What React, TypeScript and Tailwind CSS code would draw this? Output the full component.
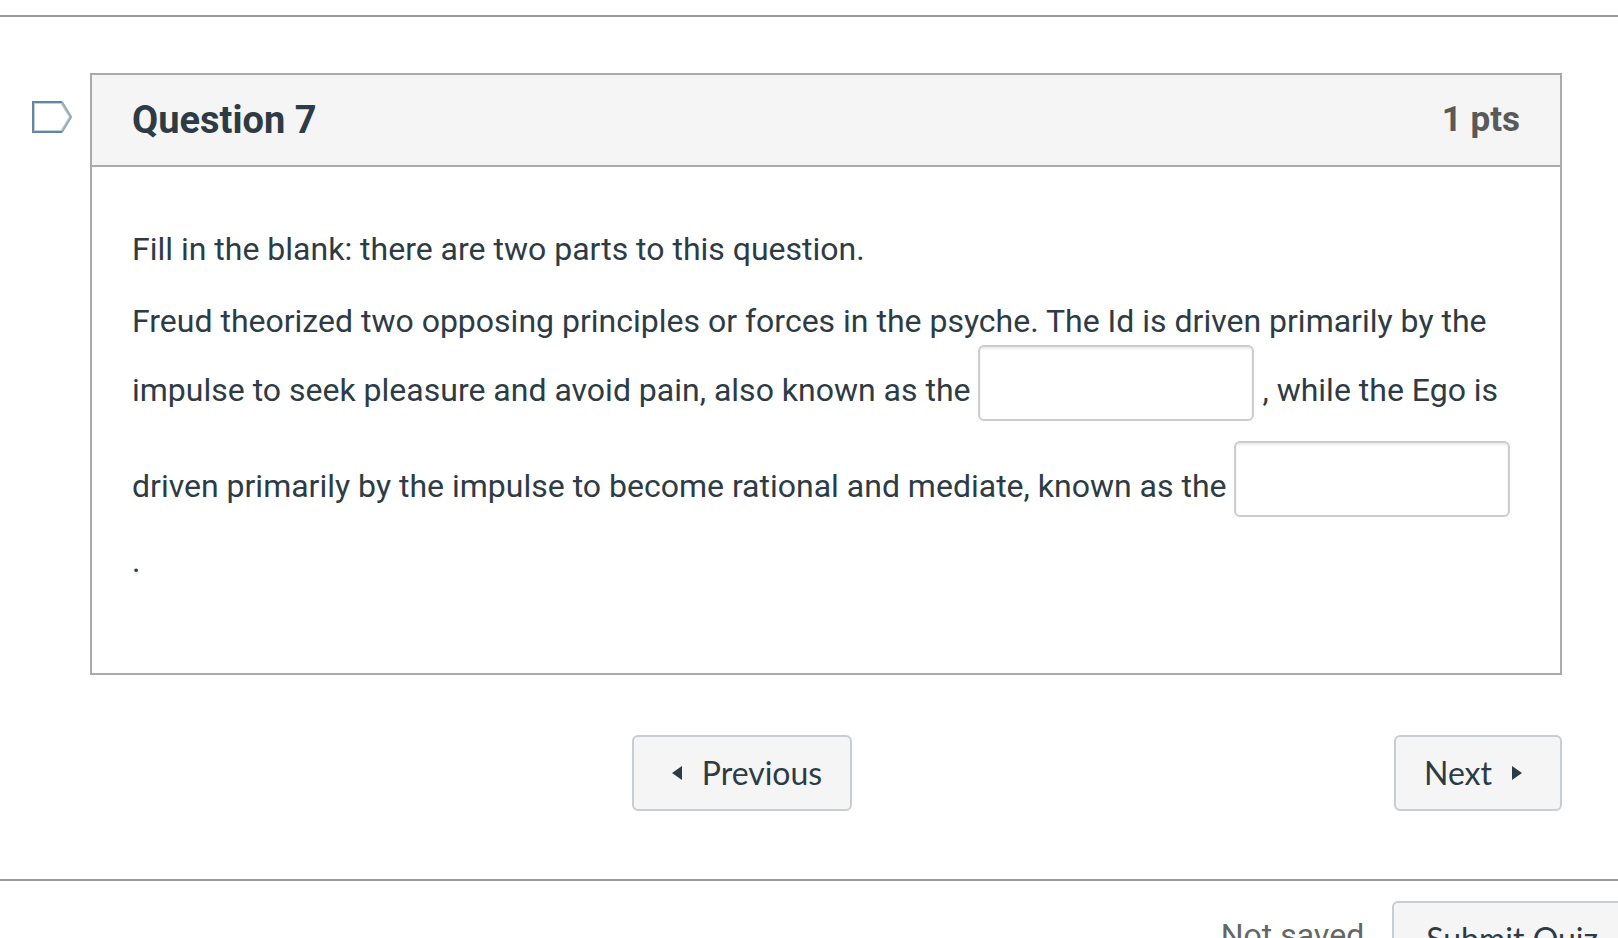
import { useState } from 'react';
import type { ReactNode } from 'react';

function QuizButton({ children, wide, onClick }: { children: ReactNode; wide?: boolean; onClick?: () => void }) {
  return (
    <button
      type="button"
      onClick={onClick}
      className={`flex h-19 shrink-0 items-center rounded-md border-2 border-[#c7cdd1] bg-[#f5f5f5] font-['Lato',sans-serif] text-[32px] leading-10 whitespace-nowrap text-[#2d3b45] ${wide ? 'px-8' : 'px-7'}`}
    >
      {children}
    </button>
  );
}

function BlankInput({ label, value, onChange }: { label: string; value: string; onChange: (v: string) => void }) {
  return (
    <input
      type="text"
      aria-label={label}
      value={value}
      onChange={(e) => onChange(e.target.value)}
      className="mb-5 inline-block h-19 w-69 rounded-md border-2 border-[#cccccc] bg-white px-4 align-middle shadow-[inset_0_2px_2px_rgba(0,0,0,0.075)] outline-none"
    />
  );
}

export default function App() {
  const [flagged, setFlagged] = useState(false);
  const [first, setFirst] = useState('');
  const [second, setSecond] = useState('');

  return (
    <div className="h-screen overflow-hidden bg-white pt-[15px] font-['Roboto',sans-serif] text-[32px] leading-12 text-[#2d3b45]">
      <main className="border-y-2 border-[#999999] pt-14 pr-14 pb-17">
        <div className="flex items-start">
          <div className="flex w-[90px] shrink-0 justify-start pt-7 pl-8">
            <button
              type="button"
              aria-label="Flag this question"
              aria-pressed={flagged}
              onClick={() => setFlagged(!flagged)}
            >
              <svg width="40" height="32" viewBox="0 0 40 32" fill={flagged ? '#fcd34d' : 'none'} className="block">
                <path d="M1.5 1.5H29.5L38.5 16L29.5 30.5H1.5Z" stroke="#c3d0da" strokeWidth="3" />
                <path d="M30 1L39 16L30 31" stroke="#94abbd" strokeWidth="2" />
                <path d="M30 1H1V31H30" stroke="#6387a0" strokeWidth="2" />
              </svg>
            </button>
          </div>

          <section className="min-w-0 flex-1 border-2 border-[#aaaaaa]">
            <header className="flex h-23 items-center justify-between border-b-2 border-[#aaaaaa] bg-[#f5f5f5] px-10 font-bold">
              <h2 className="text-[38px]">Question 7</h2>
              <span className="text-[35px] text-[#595959]">1 pts</span>
            </header>
            <div className="px-10 pt-[58px] pb-22">
              <p className="mb-6">Fill in the blank: there are two parts to this question.</p>
              <p>
                Freud theorized two opposing principles or forces in the psyche. The Id is driven primarily by the
                impulse to seek pleasure and avoid pain, also known as the{' '}
                <BlankInput label="First blank" value={first} onChange={setFirst} /> , while the Ego is driven
                primarily by the impulse to become rational and mediate, known as the{' '}
                <BlankInput label="Second blank" value={second} onChange={setSecond} /> .
              </p>
            </div>
          </section>
        </div>

        <nav className="mt-15 flex items-center pl-[90px]">
          <div className="flex-1" />
          <QuizButton>
            <svg width="10" height="14" viewBox="0 0 10 14" className="mr-5 ml-2.5" aria-hidden="true">
              <path d="M10 0V14L0 7Z" fill="#2d3b45" />
            </svg>
            Previous
          </QuizButton>
          <div className="flex-1" />
          <QuizButton>
            Next
            <svg width="10" height="14" viewBox="0 0 10 14" className="mr-2.5 ml-5" aria-hidden="true">
              <path d="M0 0V14L10 7Z" fill="#2d3b45" />
            </svg>
          </QuizButton>
        </nav>
      </main>

      <footer className="-mr-3.5 flex items-center justify-end gap-7 pt-5">
        <span className="pb-2 text-[#666666]">Not saved</span>
        <QuizButton wide>Submit Quiz</QuizButton>
      </footer>
    </div>
  );
}
